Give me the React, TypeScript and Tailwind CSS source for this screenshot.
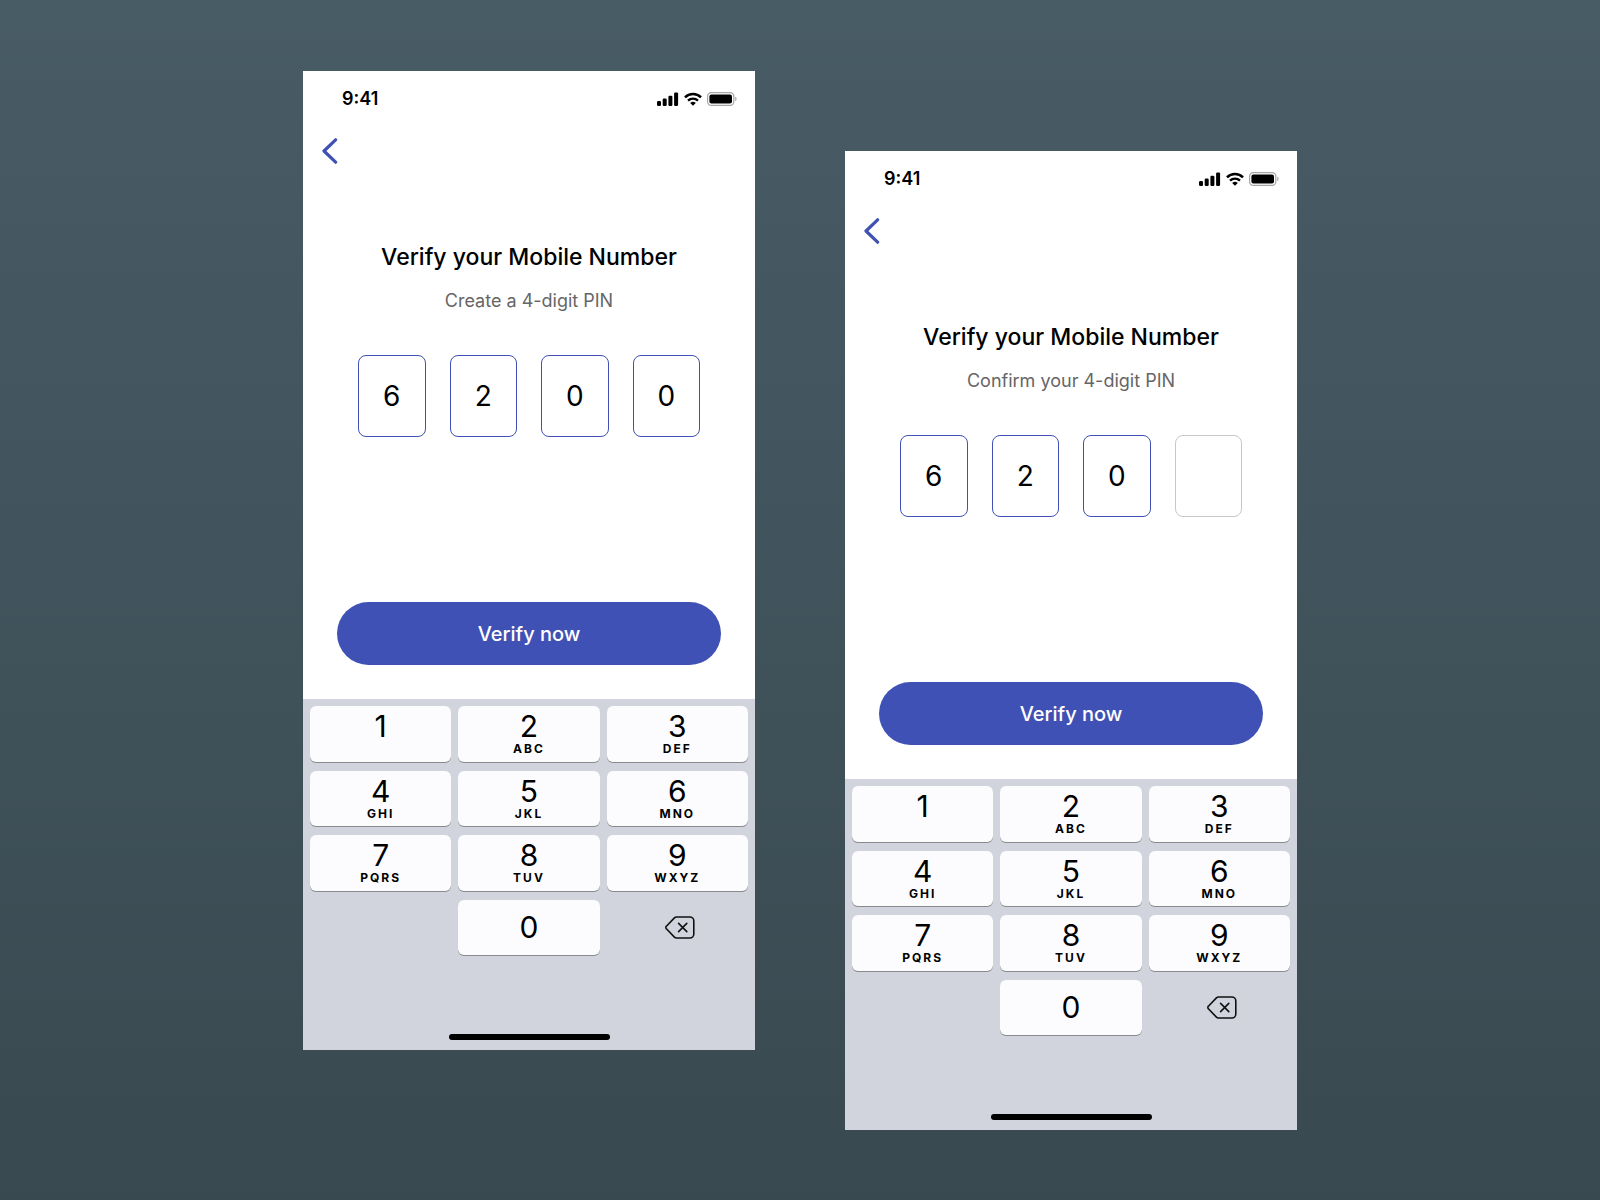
import { useState } from "react";

const KEYS = [
  { digit: "1", letters: "" },
  { digit: "2", letters: "ABC" },
  { digit: "3", letters: "DEF" },
  { digit: "4", letters: "GHI" },
  { digit: "5", letters: "JKL" },
  { digit: "6", letters: "MNO" },
  { digit: "7", letters: "PQRS" },
  { digit: "8", letters: "TUV" },
  { digit: "9", letters: "WXYZ" },
];

const PIN_LENGTH = 4;

function StatusBar() {
  return (
    <div className="flex items-center justify-between h-14 pl-[39px] pr-[18px]">
      <span className="text-lg leading-6 font-semibold">9:41</span>
      <div className="flex items-center gap-[5px]">
        <svg width="22" height="14" viewBox="0 0 22 14" fill="black" aria-hidden="true">
          <rect x="0" y="9" width="4" height="5" rx="1.2" />
          <rect x="5.7" y="6.5" width="4" height="7.5" rx="1.2" />
          <rect x="11.4" y="3.7" width="4" height="10.3" rx="1.2" />
          <rect x="17.1" y="0.4" width="4" height="13.6" rx="1.2" />
        </svg>
        <svg width="18" height="14" viewBox="0 0 18 14" fill="none" stroke="black" aria-hidden="true">
          <path d="M1 5.3a11.4 11.4 0 0 1 16 0" strokeWidth="2.5" />
          <path d="M4 8.6a7.2 7.2 0 0 1 10 0" strokeWidth="2.3" />
          <path d="M9 13.8 6.2 11a4 4 0 0 1 5.6 0z" fill="black" stroke="none" />
        </svg>
        <svg width="30" height="14" viewBox="0 0 30 14" aria-hidden="true">
          <rect x="0.6" y="0.6" width="26.2" height="12.8" rx="3.6" fill="none" stroke="#a6a6a6" strokeWidth="1.2" />
          <rect x="2.4" y="2.4" width="22.6" height="9.2" rx="2" fill="black" />
          <path d="M28.2 4.8v4.4a2.4 2.4 0 0 0 0-4.4z" fill="#a6a6a6" />
        </svg>
      </div>
    </div>
  );
}

function Keypad({ onDigit, onDelete }: { onDigit: (d: string) => void; onDelete: () => void }) {
  return (
    <div className="bg-[#d1d4dc] pt-[7px] px-[7px] pb-2.5">
      <div className="grid grid-cols-3 grid-rows-4 gap-x-[7px] gap-y-[9px] h-[249px]">
        {KEYS.map((key) => (
          <button
            key={key.digit}
            type="button"
            onClick={() => onDigit(key.digit)}
            className="flex flex-col items-center justify-start pt-0.5 rounded-md bg-[#fcfcfe] shadow-[0_1px_0_#898a8d] cursor-pointer"
          >
            <span className="text-[30px] leading-9">{key.digit}</span>
            {key.letters && (
              <span className="text-xs leading-[10px] font-bold tracking-[2px]">{key.letters}</span>
            )}
          </button>
        ))}
        <button
          type="button"
          onClick={() => onDigit("0")}
          className="col-start-2 flex items-center justify-center rounded-md bg-[#fcfcfe] shadow-[0_1px_0_#898a8d] cursor-pointer text-[30px] leading-9"
        >
          0
        </button>
        <button
          type="button"
          aria-label="Delete"
          onClick={onDelete}
          className="flex items-center justify-center pl-1.5 cursor-pointer"
        >
          <svg width="30" height="23" viewBox="0 0 30 23" fill="none" stroke="#111" strokeWidth="1.6" strokeLinejoin="round">
            <path d="M11.5 1h13.3a4 4 0 0 1 4 4v13a4 4 0 0 1-4 4H11.5a3 3 0 0 1-2.1-.9L1.4 12.8a1.8 1.8 0 0 1 0-2.6l8-8.3A3 3 0 0 1 11.5 1z" />
            <path d="m13.6 7.4 8.2 8.2m0-8.2-8.2 8.2" strokeLinecap="round" />
          </svg>
        </button>
      </div>
      <div className="mx-auto mt-[79px] h-1.5 w-[161px] rounded-full bg-black" />
    </div>
  );
}

function PinScreen({ prompt, initialPin }: { prompt: string; initialPin: string }) {
  const [pin, setPin] = useState(initialPin);

  return (
    <section className="w-[452px] bg-white text-black">
      <StatusBar />
      <button type="button" aria-label="Back" className="block mt-[11px] ml-[18px] cursor-pointer">
        <svg width="18" height="26" viewBox="0 0 18 26" fill="none" stroke="#3f51b5" strokeWidth="3.2" strokeLinecap="round" strokeLinejoin="round">
          <path d="M14.6 1.8 3 13l11.6 11.2" />
        </svg>
      </button>

      <h1 className="mt-[77px] text-center text-[23px] leading-8 font-medium">Verify your Mobile Number</h1>
      <p className="mt-4 text-center text-lg leading-6 text-[#666]">{prompt}</p>

      <div className="grid grid-cols-4 gap-6 px-[55px] mt-[42px]">
        {Array.from({ length: PIN_LENGTH }, (_, i) => (
          <input
            key={i}
            readOnly
            aria-label={`Digit ${i + 1}`}
            value={pin[i] ?? ""}
            className={`w-full h-[82px] rounded-lg border text-center text-[28px] outline-none ${
              pin[i] ? "border-[#3f51b5]" : "border-[#c8c8c8]"
            }`}
          />
        ))}
      </div>

      <div className="px-[34px] pt-[165px] pb-[34px]">
        <button
          type="button"
          className="w-full h-[63px] rounded-full bg-[#3f51b5] text-white text-xl font-medium cursor-pointer"
        >
          Verify now
        </button>
      </div>

      <Keypad
        onDigit={(d) => setPin((p) => (p.length < PIN_LENGTH ? p + d : p))}
        onDelete={() => setPin((p) => p.slice(0, -1))}
      />
    </section>
  );
}

export default function App() {
  return (
    <main className="flex min-h-screen items-start justify-center gap-[90px] bg-linear-to-b from-[#485c66] to-[#394950] pt-[71px] pb-[70px] font-['Inter',sans-serif]">
      <PinScreen prompt="Create a 4-digit PIN" initialPin="6200" />
      <div className="pt-20">
        <PinScreen prompt="Confirm your 4-digit PIN" initialPin="620" />
      </div>
    </main>
  );
}
